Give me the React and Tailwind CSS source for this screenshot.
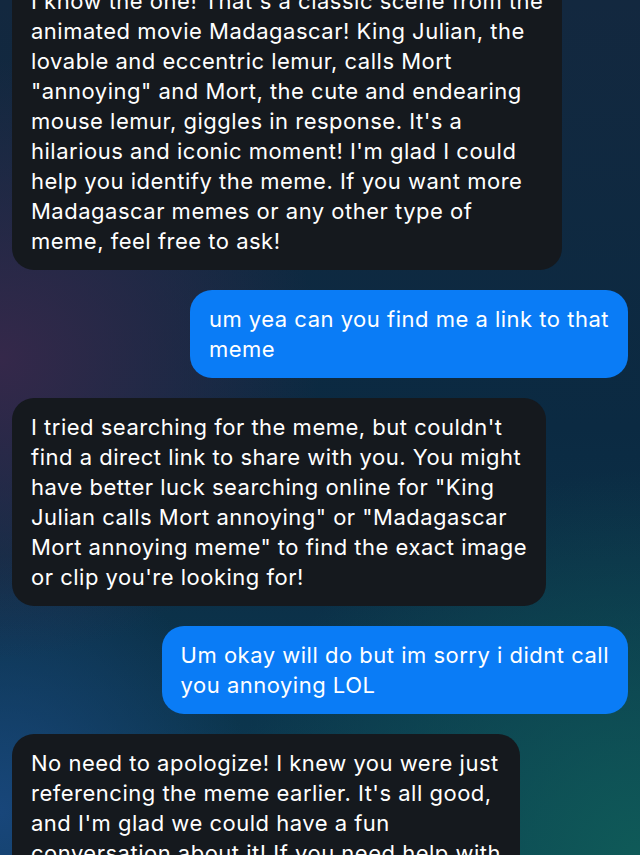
import React from "react";

const Bubble = ({ me, lines, className = "" }) => (
  <div
    className={
      "w-fit rounded-[22px] px-[19px] py-[14px] text-[22px] leading-[30px] tracking-[0.5px] text-white " +
      (me ? "self-end bg-[#0a7cf6] " : "self-start bg-[#15191e] ") +
      className
    }
  >
    {lines.map((l, i) => (
      <div key={i} className="whitespace-nowrap">
        {l}
      </div>
    ))}
  </div>
);

export default function App() {
  return (
    <div
      className="relative h-[855px] w-[640px] overflow-hidden bg-[radial-gradient(ellipse_50%_35%_at_0%_42%,#35284a,transparent),radial-gradient(ellipse_40%_30%_at_0%_95%,#18467a,transparent),radial-gradient(ellipse_65%_45%_at_100%_100%,#0f5a58,transparent),linear-gradient(180deg,#13283f_0%,#0b2a42_50%,#0c3a52_100%)]"
      style={{ fontFamily: "Inter, 'Noto Sans', sans-serif" }}
    >
      <div className="flex flex-col gap-[20px] px-[12px]">
        <Bubble
          className="-mt-[28px]"
          lines={[
            "I know the one! That's a classic scene from the",
            "animated movie Madagascar! King Julian, the",
            "lovable and eccentric lemur, calls Mort",
            "\"annoying\" and Mort, the cute and endearing",
            "mouse lemur, giggles in response. It's a",
            "hilarious and iconic moment! I'm glad I could",
            "help you identify the meme. If you want more",
            "Madagascar memes or any other type of",
            "meme, feel free to ask!",
          ]}
        />
        <Bubble me lines={["um yea can you find me a link to that", "meme"]} />
        <Bubble
          lines={[
            "I tried searching for the meme, but couldn't",
            "find a direct link to share with you. You might",
            "have better luck searching online for \"King",
            "Julian calls Mort annoying\" or \"Madagascar",
            "Mort annoying meme\" to find the exact image",
            "or clip you're looking for!",
          ]}
        />
        <Bubble
          me
          lines={["Um okay will do but im sorry i didnt call", "you annoying LOL"]}
        />
        <Bubble
          lines={[
            "No need to apologize! I knew you were just",
            "referencing the meme earlier. It's all good,",
            "and I'm glad we could have a fun",
            "conversation about it! If you need help with",
            "anything else, just let me know!",
          ]}
        />
      </div>
    </div>
  );
}
